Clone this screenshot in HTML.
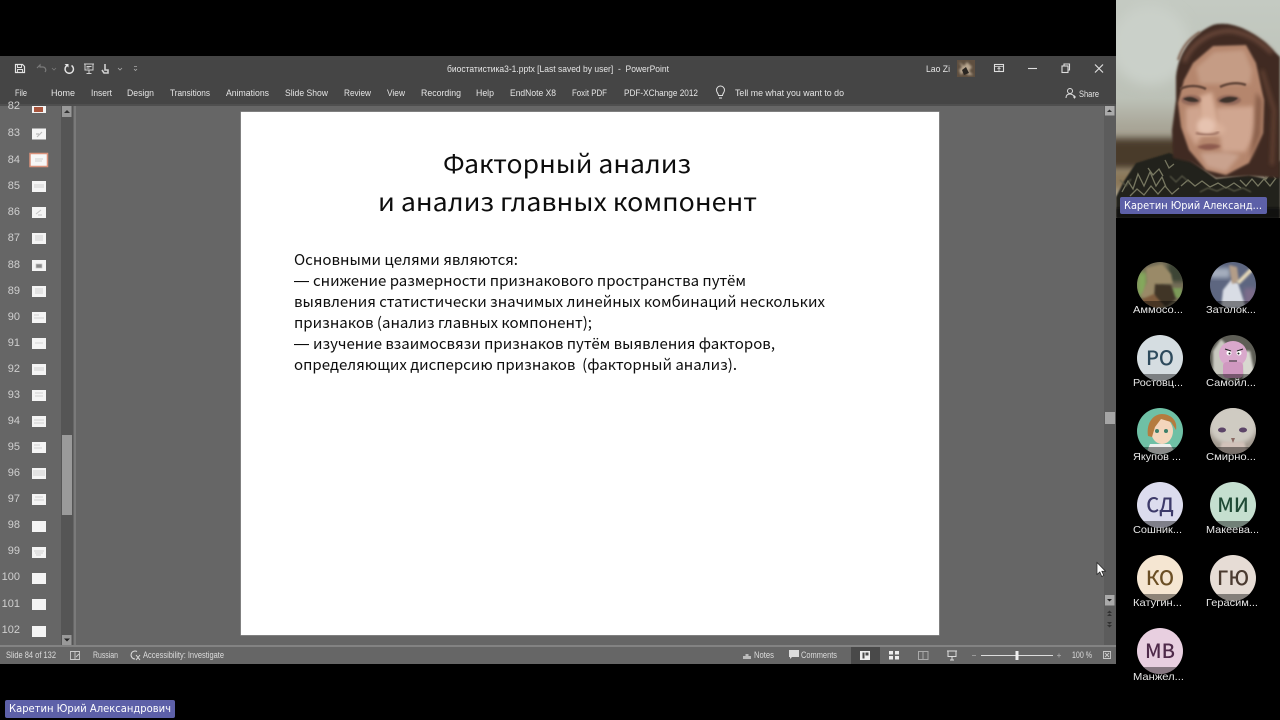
<!DOCTYPE html>
<html><head><meta charset="utf-8"><style>
html,body{margin:0;padding:0;background:#000;width:1280px;height:720px;overflow:hidden}
svg{display:block}
text{font-family:"Liberation Sans","Noto Sans CJK SC",sans-serif}
.s{font-family:"Noto Sans CJK SC","Liberation Sans",sans-serif;fill:#0e0e0e}
.r{font-size:9.5px;fill:#e6e6e6}
.n{font-size:11px;fill:#cfcfcf;text-anchor:end}
.st{font-size:9px;fill:#dcdcdc}
.a{font-size:20px;font-weight:500;text-anchor:middle;font-family:"Noto Sans CJK SC","Liberation Sans",sans-serif}
.l{font-size:10.5px;fill:#e6e6e6}
.tag{font-size:11px;fill:#fff;font-family:"DejaVu Sans","Liberation Sans",sans-serif}
</style></head><body>
<svg width="1280" height="720" viewBox="0 0 1280 720" xmlns="http://www.w3.org/2000/svg">
<defs>
<filter id="b" x="-5%" y="-5%" width="110%" height="110%"><feGaussianBlur stdDeviation="0.35"/></filter>
<filter id="b06" x="-30%" y="-60%" width="160%" height="220%"><feGaussianBlur stdDeviation="0.7"/></filter>
<filter id="b1" x="-20%" y="-20%" width="140%" height="140%"><feGaussianBlur stdDeviation="1"/></filter>
<filter id="b2" x="-30%" y="-30%" width="160%" height="160%"><feGaussianBlur stdDeviation="2"/></filter>
<filter id="b4" x="-40%" y="-60%" width="180%" height="220%"><feGaussianBlur stdDeviation="4"/></filter>
<filter id="b6" x="-40%" y="-40%" width="180%" height="180%"><feGaussianBlur stdDeviation="6"/></filter>
<linearGradient id="bg" x1="0" y1="0" x2="0" y2="1"><stop offset="0" stop-color="#c4cac2"/><stop offset=".45" stop-color="#bcc1b7"/><stop offset=".58" stop-color="#a9a698"/><stop offset="1" stop-color="#a9a08a"/></linearGradient>
<clipPath id="vc"><rect x="1116" y="0" width="164" height="218"/></clipPath>
<clipPath id="c1"><circle cx="1160" cy="285" r="23"/></clipPath>
<clipPath id="c2"><circle cx="1233" cy="285" r="23"/></clipPath>
<clipPath id="c3"><circle cx="1233" cy="358" r="23"/></clipPath>
<clipPath id="c4"><circle cx="1160" cy="431" r="23"/></clipPath>
<clipPath id="c5"><circle cx="1233" cy="431" r="23"/></clipPath>
<clipPath id="c6"><circle cx="1160" cy="358" r="23"/></clipPath>
<clipPath id="c7"><circle cx="1160" cy="505" r="23"/></clipPath>
<clipPath id="c8"><circle cx="1233" cy="505" r="23"/></clipPath>
<clipPath id="c9"><circle cx="1160" cy="578" r="23"/></clipPath>
<clipPath id="c10"><circle cx="1233" cy="578" r="23"/></clipPath>
<clipPath id="c11"><circle cx="1160" cy="651" r="23"/></clipPath>
</defs>
<rect width="1280" height="720" fill="#000"/>

<g filter="url(#b)">
<!-- window -->
<rect x="0" y="56" width="1116" height="608" fill="#666"/>
<rect x="0" y="56" width="1116" height="48" fill="#444"/>
<rect x="0" y="104" width="1116" height="2" fill="#4f4f4f"/>

<!-- quick access -->
<g fill="none" stroke="#e4e4e4" stroke-width="1.2">
<path d="M15.5 64.5h7l2 2v6h-9z"/><path d="M17.5 64.5v3h4v-3M17.5 72.5v-3h5v3" stroke-width=".9"/>
<path d="M37 68l3-3v2h3a3 3 0 0 1 2 5" stroke="#7a7a7a"/>
<path d="M52 68l2 2 2-2" stroke="#7a7a7a" stroke-width=".8"/>
<path d="M71.5 65.5a4.2 4.2 0 1 1-4.5 0" stroke-width="1.4"/><path d="M64.5 64h4v3.500z" fill="#e4e4e4" stroke="none"/>
<path d="M84 64h10M85 64v6h8v-6M89 70v3M86.5 73.5h5M86.500 66.500h5M86.500 68h3" stroke="#d0d0d0" stroke-width="1"/>
<path d="M105 64v6h3v3h-4l-2-3" stroke="#d0d0d0" stroke-width="1.6"/>
<path d="M118 68l2 2 2-2M134 66.5h3M134 69l1.500 1.500 1.500-1.500" stroke="#aaa" stroke-width=".8"/>
</g>

<!-- title -->
<text x="447" y="72" class="r" textLength="222" lengthAdjust="spacingAndGlyphs" xml:space="preserve">биостатистика3-1.pptx [Last saved by user]  -  PowerPoint</text>
<text x="926" y="72" class="r" textLength="24" lengthAdjust="spacingAndGlyphs">Lao Zi</text>
<rect x="957" y="60" width="18" height="17" fill="#5e4f40"/>
<path d="M959 62l5 4 3-4 5 5-3 4 4 4h-5l-3-4-4 4-2-5 3-3z" fill="#b7a58e" filter="url(#b1)"/>
<path d="M962 70l4-3 3 6-5 2z" fill="#2b2520"/>
<g fill="none" stroke="#dedede" stroke-width="1.1">
<rect x="994.500" y="64.500" width="9" height="7"/><path d="M994.500 66.500h9M999 71v-3M997.500 69l1.500-1.500 1.500 1.500" stroke-width=".8"/>
<path d="M1028 68.500h9"/>
<rect x="1062" y="66" width="6" height="6.500"/><path d="M1064 66v-2h5.500v6h-1.500"/>
<path d="M1095 64.500l8 8M1103 64.500l-8 8" stroke-width="1.200"/>
</g>

<!-- ribbon -->
<text x="15" y="96" class="r" textLength="12" lengthAdjust="spacingAndGlyphs">File</text>
<text x="51" y="96" class="r" textLength="24" lengthAdjust="spacingAndGlyphs">Home</text>
<text x="91" y="96" class="r" textLength="21" lengthAdjust="spacingAndGlyphs">Insert</text>
<text x="127" y="96" class="r" textLength="27" lengthAdjust="spacingAndGlyphs">Design</text>
<text x="170" y="96" class="r" textLength="40" lengthAdjust="spacingAndGlyphs">Transitions</text>
<text x="226" y="96" class="r" textLength="43" lengthAdjust="spacingAndGlyphs">Animations</text>
<text x="285" y="96" class="r" textLength="43" lengthAdjust="spacingAndGlyphs">Slide Show</text>
<text x="344" y="96" class="r" textLength="27" lengthAdjust="spacingAndGlyphs">Review</text>
<text x="387" y="96" class="r" textLength="18" lengthAdjust="spacingAndGlyphs">View</text>
<text x="421" y="96" class="r" textLength="40" lengthAdjust="spacingAndGlyphs">Recording</text>
<text x="476" y="96" class="r" textLength="18" lengthAdjust="spacingAndGlyphs">Help</text>
<text x="510" y="96" class="r" textLength="46" lengthAdjust="spacingAndGlyphs">EndNote X8</text>
<text x="572" y="96" class="r" textLength="35" lengthAdjust="spacingAndGlyphs">Foxit PDF</text>
<text x="624" y="96" class="r" textLength="74" lengthAdjust="spacingAndGlyphs">PDF-XChange 2012</text>
<path d="M718.500 95.500c0-2-2-3-2-5.500a4 4 0 0 1 8 0c0 2.500-2 3.500-2 5.500zM719 98h3" fill="none" stroke="#e2e2e2" stroke-width="1"/>
<text x="735" y="96" class="r" textLength="109" lengthAdjust="spacingAndGlyphs">Tell me what you want to do</text>
<circle cx="1070" cy="91" r="2.500" fill="none" stroke="#ddd"/><path d="M1066 98c0-3 2-4 4-4s3 1 4 2M1073 97h3M1074.500 95.500v3" fill="none" stroke="#ddd"/>
<text x="1079" y="97" class="r" textLength="20" lengthAdjust="spacingAndGlyphs">Share</text>

<!-- left pane -->
<rect x="61" y="106" width="12" height="540" fill="#555"/>
<rect x="74" y="106" width="2" height="540" fill="#7a7a7a"/>
<rect x="62" y="106" width="9.500" height="11" fill="#999"/><path d="M64 113l3-3 3 3z" fill="#333"/>
<rect x="62" y="435" width="10" height="80" fill="#9a9a9a"/>
<rect x="62" y="635" width="9.500" height="10" fill="#999"/><path d="M64 638.500l3 3 3-3z" fill="#222"/>

<text x="20" y="109" class="n">82</text>
<text x="20" y="136" class="n">83</text>
<text x="20" y="163" class="n">84</text>
<text x="20" y="189" class="n">85</text>
<text x="20" y="215" class="n">86</text>
<text x="20" y="241" class="n">87</text>
<text x="20" y="268" class="n">88</text>
<text x="20" y="294" class="n">89</text>
<text x="20" y="320" class="n">90</text>
<text x="20" y="346" class="n">91</text>
<text x="20" y="372" class="n">92</text>
<text x="20" y="398" class="n">93</text>
<text x="20" y="424" class="n">94</text>
<text x="20" y="450" class="n">95</text>
<text x="20" y="476" class="n">96</text>
<text x="20" y="502" class="n">97</text>
<text x="20" y="528" class="n">98</text>
<text x="20" y="554" class="n">99</text>
<text x="20" y="580" class="n">100</text>
<text x="20" y="607" class="n">101</text>
<text x="20" y="633" class="n">102</text>

<g fill="#f4f4f4">
<rect x="32" y="106" width="14" height="7"/>
<rect x="32" y="128.500" width="14" height="11"/>
<rect x="32" y="181" width="14" height="11"/>
<rect x="32" y="207" width="14" height="11"/>
<rect x="32" y="233" width="14" height="11"/>
<rect x="32" y="260" width="14" height="11"/>
<rect x="32" y="286" width="14" height="11"/>
<rect x="32" y="312" width="14" height="11"/>
<rect x="32" y="338" width="14" height="11"/>
<rect x="32" y="364" width="14" height="11"/>
<rect x="32" y="390" width="14" height="11"/>
<rect x="32" y="416" width="14" height="11"/>
<rect x="32" y="442" width="14" height="11"/>
<rect x="32" y="468" width="14" height="11"/>
<rect x="32" y="494" width="14" height="11"/>
<rect x="32" y="521" width="14" height="11"/>
<rect x="32" y="547" width="14" height="11"/>
<rect x="32" y="573" width="14" height="11"/>
<rect x="32" y="599" width="14" height="11"/>
<rect x="32" y="626" width="14" height="11"/>
</g>
<rect x="30" y="153.500" width="17.500" height="13" fill="#f6f6f6" stroke="#d9917a" stroke-width="1.500"/>
<rect x="34" y="107" width="9" height="5" fill="#a8553c"/>
<path d="M37 137l5-5M36 134h3" stroke="#bbb" stroke-width="1.200"/>
<g stroke="#c4c4c4" stroke-width=".7">
<path d="M35 159h8M35 161h7"/>
<path d="M34 185h10M34 187h10"/>
<path d="M36 214l5-4M38 215h4" stroke-width="1"/>
<path d="M35 236h8M35 238h8M35 240h8"/>
<path d="M36 264h6v4h-6z" fill="#888"/>
<path d="M35 289h8M35 291h8M35 293h8"/>
<path d="M34 315h5M34 318h10"/>
<path d="M35 343h8"/>
<path d="M34 368h10M34 370h10"/>
<path d="M35 393h8M35 396h8"/>
<path d="M34 420h10M34 423h10"/>
<path d="M34 445h6M34 448h8"/>
<path d="M33 471h12M33 473h12M33 475h12"/>
<path d="M35 497h8M34 500h10"/>
<path d="M34 551h10M35 553h8M36 555h5"/>
</g>

<!-- slide -->
<rect x="240.500" y="111.500" width="699" height="524" fill="#9a9a9a"/>
<rect x="241" y="112" width="698" height="523" fill="#fff"/>
<text x="443" y="173" class="s" font-size="25" textLength="248" lengthAdjust="spacingAndGlyphs">Факторный анализ</text>
<text x="378" y="211" class="s" font-size="25" textLength="379" lengthAdjust="spacingAndGlyphs">и анализ главных компонент</text>
<text x="294" y="265" class="s" font-size="15" textLength="224" lengthAdjust="spacingAndGlyphs">Основными целями являются:</text>
<rect x="294" y="281" width="15" height="1.100" fill="#111"/>
<text x="313" y="286" class="s" font-size="15" textLength="433" lengthAdjust="spacingAndGlyphs">снижение размерности признакового пространства путём</text>
<text x="294" y="307" class="s" font-size="15" textLength="531" lengthAdjust="spacingAndGlyphs">выявления статистически значимых линейных комбинаций нескольких</text>
<text x="294" y="328" class="s" font-size="15" textLength="298" lengthAdjust="spacingAndGlyphs">признаков (анализ главных компонент);</text>
<rect x="294" y="344" width="15" height="1.100" fill="#111"/>
<text x="313" y="349" class="s" font-size="15" textLength="462" lengthAdjust="spacingAndGlyphs">изучение взаимосвязи признаков путём выявления факторов,</text>
<text x="294" y="370" class="s" font-size="15" textLength="443" lengthAdjust="spacingAndGlyphs">определяющих дисперсию признаков &#160;(факторный анализ).</text>

<!-- right scrollbar -->
<rect x="1104" y="106" width="12" height="540" fill="#5c5c5c"/>
<rect x="1105" y="106" width="9.500" height="9.500" fill="#aaa"/><path d="M1107 112l2.500-2.500 2.500 2.500z" fill="#333"/>
<rect x="1105" y="412" width="10" height="12" fill="#a5a5a5"/>
<rect x="1105" y="595" width="9.500" height="10.500" fill="#aaa"/><path d="M1107 599l2.500 2.500 2.500-2.500z" fill="#222"/>
<path d="M1107 613l2.500-2.500 2.500 2.500zM1107 616l2.500-2.500 2.500 2.500zM1107 622l2.500 2.500 2.500-2.500zM1107 625l2.500 2.500 2.500-2.500z" fill="#333"/>

<!-- cursor -->
<path d="M1097 562.500v12l2.800-2.500 2 4.500 2-1-2-4.300h3.700z" fill="#fff" stroke="#222" stroke-width=".7"/>

<!-- status -->
<rect x="0" y="645" width="1116" height="2" fill="#838383"/>
<rect x="0" y="647" width="1116" height="17" fill="#666"/>
<text x="6" y="658" class="st" textLength="50" lengthAdjust="spacingAndGlyphs">Slide 84 of 132</text>
<path d="M70.500 651.500h9v8h-9zM75 651.500v8M76 657l3-3" fill="none" stroke="#ccc" stroke-width=".9"/>
<text x="93" y="658" class="st" textLength="25" lengthAdjust="spacingAndGlyphs">Russian</text>
<path d="M137 651.500a4 4 0 1 0-2 7.500M136 655l4 5M140 655l-4 5" fill="none" stroke="#ddd" stroke-width="1"/>
<text x="143" y="658" class="st" textLength="81" lengthAdjust="spacingAndGlyphs">Accessibility: Investigate</text>
<path d="M743 659v-3h2.500v-2h3v2h2.500v3z" fill="#bbb"/>
<text x="754" y="658" class="st" textLength="20" lengthAdjust="spacingAndGlyphs">Notes</text>
<path d="M789 650h10v7h-7l-2 2v-2h-1z" fill="#ddd"/>
<text x="801" y="658" class="st" textLength="36" lengthAdjust="spacingAndGlyphs">Comments</text>
<rect x="851" y="647" width="29" height="17" fill="#4a4a4a"/>
<rect x="860" y="651" width="10" height="9" fill="#eee"/><rect x="862.500" y="652.500" width="2" height="6" fill="#4a4a4a"/><rect x="865.500" y="652.500" width="3" height="3" fill="#4a4a4a"/>
<path d="M889 651h4v3.500h-4zM895 651h4v3.500h-4zM889 656h4v3.500h-4zM895 656h4v3.500h-4z" fill="#eee"/>
<path d="M918.500 651.500h9.500v8h-9.500zM923 651.500v8" fill="none" stroke="#aaa"/>
<path d="M947 651h10M948 651.500v5h8v-5M952 656.500v3M950 660h4" fill="none" stroke="#ddd" stroke-width="1"/>
<path d="M972 655.500h4M1057 655.500h4M1059 653.500v4" stroke="#aaa" stroke-width=".8"/>
<rect x="981" y="655" width="72" height="1" fill="#ddd"/>
<rect x="1015.500" y="651" width="3" height="9" fill="#f0f0f0"/>
<text x="1072" y="658" class="st" textLength="20" lengthAdjust="spacingAndGlyphs">100 %</text>
<path d="M1103.500 651.500h7v7h-7zM1105 653l4 4M1109 653l-4 4" fill="none" stroke="#ccc" stroke-width=".9"/>

<!-- bottom tag -->
<rect x="5" y="700" width="170" height="18" rx="2" fill="#5d60a8"/>
<text x="9" y="712" class="tag" textLength="162" lengthAdjust="spacingAndGlyphs">Каретин Юрий Александрович</text>
</g>

<!-- video -->
<g clip-path="url(#vc)">
<rect x="1116" y="0" width="164" height="218" fill="url(#bg)"/>
<ellipse cx="1150" cy="45" rx="40" ry="40" fill="#cad0c9" filter="url(#b6)"/>
<!-- dark band at shelf level -->
<rect x="1108" y="138" width="78" height="32" fill="#4a3a2c" filter="url(#b4)"/>
<rect x="1108" y="170" width="34" height="20" fill="#8a7759" filter="url(#b4)"/>
<!-- shirt -->
<path d="M1116 197l8-16 12-18 33-10 20 6 27 20 33-4 17 4 14-19v58h-164z" fill="#24231b" filter="url(#b06)"/>
<g fill="none" stroke="#85856c" stroke-width="1.300" filter="url(#b)" opacity=".85">
<path d="M1122 192l6-11 5 8 5-15 6 12 6-14 6 14 6-9 4 10"/>
<path d="M1130 196l7-7 7 6 7-9 7 8 7-8 7 8 7-6"/>
<path d="M1148 168l5 7 6-6 4 7M1165 160l4 8 5-4"/>
<path d="M1181 186l7-6 7 6 7-5 8 6 8-4 8 5 8-5 7 5"/>
<path d="M1240 180l6 6 6-7 6 7 6-7 6 7 6-8"/>
<path d="M1262 172l4 7 5-6 5 6"/>
</g>
<g fill="none" stroke="#5f5f4b" stroke-width="1.100" filter="url(#b06)">
<path d="M1120 180l6 6 5-7M1170 176l6 6 6-6 7 6M1200 192l8-4 9 3 9-4 8 4 9-3 8 4"/>
</g>
<!-- hair -->
<path d="M1176 77C1178 55 1190 35 1213 25C1228 21 1246 27 1266 43L1280 57V178L1266 177L1249 176L1216 178L1190 162L1173 158L1172 130L1176 100z" fill="#412c22" filter="url(#b1)"/>
<path d="M1184 62C1192 42 1212 30 1232 31C1246 33 1260 41 1272 53" fill="none" stroke="#6c4a3a" stroke-width="4" filter="url(#b2)"/>
<path d="M1178 60C1182 46 1190 38 1200 32" fill="none" stroke="#7a5a48" stroke-width="2" filter="url(#b1)"/>
<path d="M1262 70L1274 110L1272 165" fill="none" stroke="#6a4636" stroke-width="3" filter="url(#b2)"/>
<!-- face -->
<path d="M1184 80L1193 63L1213 46L1246 45L1256 63L1264 100L1263 133L1249 163L1226 175L1206 170L1189 150L1181 127L1178 103z" fill="#b5866d" filter="url(#b1)"/>
<path d="M1196 68L1214 52L1244 50L1252 70L1250 84L1200 84z" fill="#c59c85" filter="url(#b2)"/>
<path d="M1186 108L1200 106L1204 132L1196 146L1186 130z" fill="#cfa48e" filter="url(#b2)"/>
<path d="M1216 108L1254 106L1258 130L1245 152L1222 152z" fill="#d0a690" filter="url(#b2)"/>
<path d="M1200 153L1226 152L1240 155L1226 172L1207 167z" fill="#c9a28e" filter="url(#b2)"/>
<path d="M1200 96L1212 92L1218 120L1226 130L1220 136H1196L1200 128z" fill="#d9b09a" filter="url(#b2)"/>
<ellipse cx="1206" cy="126" rx="9" ry="8" fill="#e6c3b0" filter="url(#b2)"/>
<path d="M1256 92L1262 100L1261 134L1250 160L1254 125z" fill="#8b604c" filter="url(#b2)"/>
<!-- eyebrows -->
<path d="M1180 89C1188 85 1198 85 1206 89M1220 87C1228 83 1238 82 1246 85" fill="none" stroke="#624537" stroke-width="2.500" filter="url(#b06)"/>
<!-- eye sockets -->
<ellipse cx="1191" cy="100" rx="10" ry="5" fill="#93695a" filter="url(#b1)"/>
<ellipse cx="1229" cy="100" rx="12" ry="5" fill="#93695a" filter="url(#b1)"/>
<path d="M1183 99C1187 96 1194 96 1199 101C1194 103 1188 102 1183 99z" fill="#3d302c" filter="url(#b06)"/>
<path d="M1219 101C1224 96 1232 96 1238 98C1234 103 1225 104 1219 101z" fill="#3d302c" filter="url(#b06)"/>
<!-- nose, mouth -->
<path d="M1196 133C1202 135 1212 136 1219 132" fill="none" stroke="#8d6052" stroke-width="1.800" filter="url(#b1)"/>
<path d="M1197 147C1204 143 1214 143 1221 146C1214 151 1204 151 1197 147z" fill="#8d5a4d" filter="url(#b1)"/>
<!-- bottom darken -->
<rect x="1116" y="208" width="164" height="12" fill="#0d0d0a" opacity=".8" filter="url(#b1)"/>
</g>
<rect x="1116" y="218" width="164" height="12" fill="#000"/>
<rect x="1120" y="197" width="147" height="17" rx="2" fill="#5d60a8" filter="url(#b)"/>
<text x="1124" y="209" class="tag" textLength="138" lengthAdjust="spacingAndGlyphs">Каретин Юрий Александ...</text>

<!-- avatars -->
<g clip-path="url(#c1)"><rect x="1137" y="262" width="46" height="46" fill="#766f58"/>
<rect x="1137" y="272" width="10" height="24" fill="#84a85c" filter="url(#b2)"/>
<rect x="1168" y="262" width="16" height="20" fill="#3c4436" filter="url(#b2)"/>
<rect x="1172" y="288" width="10" height="10" fill="#7b9a58" filter="url(#b1)"/>
<path d="M1146 268l16-4 9 10 2 10-12 0-8 14 14 4h-18l-8-6 6-14z" fill="#9a8a68" filter="url(#b1)"/>
<path d="M1155 284l16 1 5 14-10 8-12-8z" fill="#3f3428" filter="url(#b1)"/>
<path d="M1140 300l14-6 10 12-16 4z" fill="#7e5c3e" filter="url(#b1)"/></g>
<g clip-path="url(#c2)"><rect x="1210" y="262" width="46" height="46" fill="#5d6680"/>
<rect x="1210" y="268" width="20" height="10" fill="#a4adbd" filter="url(#b2)"/>
<rect x="1244" y="288" width="12" height="18" fill="#7c6c8a" filter="url(#b2)"/>
<path d="M1221 308l2-18 8-10 7 3 8 25z" fill="#d9dde5" filter="url(#b1)"/>
<path d="M1229 265l8 2 2 15-7 2z" fill="#b39d88" filter="url(#b1)"/>
<path d="M1238 283l14-14" stroke="#e3d7b8" stroke-width="4" filter="url(#b1)"/></g>
<g clip-path="url(#c6)"><rect x="1137" y="335" width="46" height="46" fill="#d5dde1"/></g>
<g clip-path="url(#c3)"><rect x="1210" y="335" width="46" height="46" fill="#5e5e56"/>
<path d="M1213 381v-30l8-12 6 6 2 36z" fill="#c8c8bf" filter="url(#b1)"/>
<path d="M1243 381l-3-30 10 0 6 30z" fill="#d8d8d0" filter="url(#b1)"/>
<ellipse cx="1233" cy="354" rx="14" ry="13" fill="#d9a8cc"/><rect x="1223" y="362" width="20" height="16" rx="4" fill="#d098c0"/>
<circle cx="1229" cy="353" r="2.500" fill="#fff"/><circle cx="1239" cy="353" r="2.500" fill="#fff"/><circle cx="1229.500" cy="353.500" r="1" fill="#222"/><circle cx="1238.500" cy="353.500" r="1" fill="#222"/>
<path d="M1225 349l6 2M1243 349l-6 2M1229 361h8" stroke="#222" stroke-width="1"/></g>
<g clip-path="url(#c4)"><rect x="1137" y="408" width="46" height="46" fill="#6fc0a5"/>
<path d="M1146 454l4-10h20l6 10z" fill="#eef0ee"/>
<ellipse cx="1162" cy="431" rx="11" ry="13" fill="#f4d6bc"/>
<path d="M1148 436c-2-14 6-22 14-22s16 6 14 16l-5-8-10-3-6 8-3 10z" fill="#b57b3e"/>
<circle cx="1166" cy="431" r="2" fill="#3d7f6a"/><circle cx="1157" cy="431" r="2" fill="#3d7f6a"/></g>
<g clip-path="url(#c5)"><rect x="1210" y="408" width="46" height="46" fill="#a29a90"/>
<ellipse cx="1233" cy="425" rx="24" ry="20" fill="#cfcbc2" filter="url(#b2)"/>
<path d="M1222 442h22l4 12h-30z" fill="#d2c2ba" filter="url(#b1)"/>
<ellipse cx="1222" cy="430" rx="4" ry="2.500" fill="#5b4568" filter="url(#b)"/><ellipse cx="1243" cy="430" rx="4" ry="2.500" fill="#5b4568" filter="url(#b)"/>
<path d="M1231 438l2 5 2-5" fill="#8a6a64" filter="url(#b)"/></g>
<g clip-path="url(#c7)"><rect x="1137" y="482" width="46" height="46" fill="#dcdcee"/></g>
<g clip-path="url(#c8)"><rect x="1210" y="482" width="46" height="46" fill="#c5dfcf"/></g>
<g clip-path="url(#c9)"><rect x="1137" y="555" width="46" height="46" fill="#f5e6d2"/></g>
<g clip-path="url(#c10)"><rect x="1210" y="555" width="46" height="46" fill="#e6dcd5"/></g>
<g clip-path="url(#c11)"><rect x="1137" y="628" width="46" height="46" fill="#e8cfe0"/></g>

<text x="1160" y="365" class="a" fill="#2d4a5c">РО</text>
<text x="1160" y="512" class="a" fill="#3d3a6a">СД</text>
<text x="1233" y="512" class="a" fill="#1f4a35">МИ</text>
<text x="1160" y="585" class="a" fill="#6b4f25">КО</text>
<text x="1233" y="585" class="a" fill="#4a3a30">ГЮ</text>
<text x="1160" y="658" class="a" fill="#4f2a4a">МВ</text>

<!-- avatar bottom shade -->
<g fill="#000" opacity=".42">
<path d="M1143.500 301a23 23 0 0 0 33 0z"/><path d="M1216.500 301a23 23 0 0 0 33 0z"/>
<path d="M1143.500 374a23 23 0 0 0 33 0z"/><path d="M1216.500 374a23 23 0 0 0 33 0z"/>
<path d="M1143.500 447a23 23 0 0 0 33 0z"/><path d="M1216.500 447a23 23 0 0 0 33 0z"/>
<path d="M1143.500 521a23 23 0 0 0 33 0z"/><path d="M1216.500 521a23 23 0 0 0 33 0z"/>
<path d="M1143.500 594a23 23 0 0 0 33 0z"/><path d="M1216.500 594a23 23 0 0 0 33 0z"/>
<path d="M1143.500 667a23 23 0 0 0 33 0z"/>
</g>

<text x="1133" y="313" class="l" textLength="50" lengthAdjust="spacingAndGlyphs">Аммосо...</text>
<text x="1206" y="313" class="l" textLength="50" lengthAdjust="spacingAndGlyphs">Затолок...</text>
<text x="1133" y="386" class="l" textLength="50" lengthAdjust="spacingAndGlyphs">Ростовц...</text>
<text x="1206" y="386" class="l" textLength="50" lengthAdjust="spacingAndGlyphs">Самойл...</text>
<text x="1133" y="460" class="l" textLength="48" lengthAdjust="spacingAndGlyphs">Якупов ...</text>
<text x="1206" y="460" class="l" textLength="50" lengthAdjust="spacingAndGlyphs">Смирно...</text>
<text x="1133" y="533" class="l" textLength="49" lengthAdjust="spacingAndGlyphs">Сошник...</text>
<text x="1206" y="533" class="l" textLength="53" lengthAdjust="spacingAndGlyphs">Макеева...</text>
<text x="1133" y="606" class="l" textLength="49" lengthAdjust="spacingAndGlyphs">Катугин...</text>
<text x="1206" y="606" class="l" textLength="52" lengthAdjust="spacingAndGlyphs">Герасим...</text>
<text x="1133" y="680" class="l" textLength="51" lengthAdjust="spacingAndGlyphs">Манжел...</text>
</svg>
</body></html>
